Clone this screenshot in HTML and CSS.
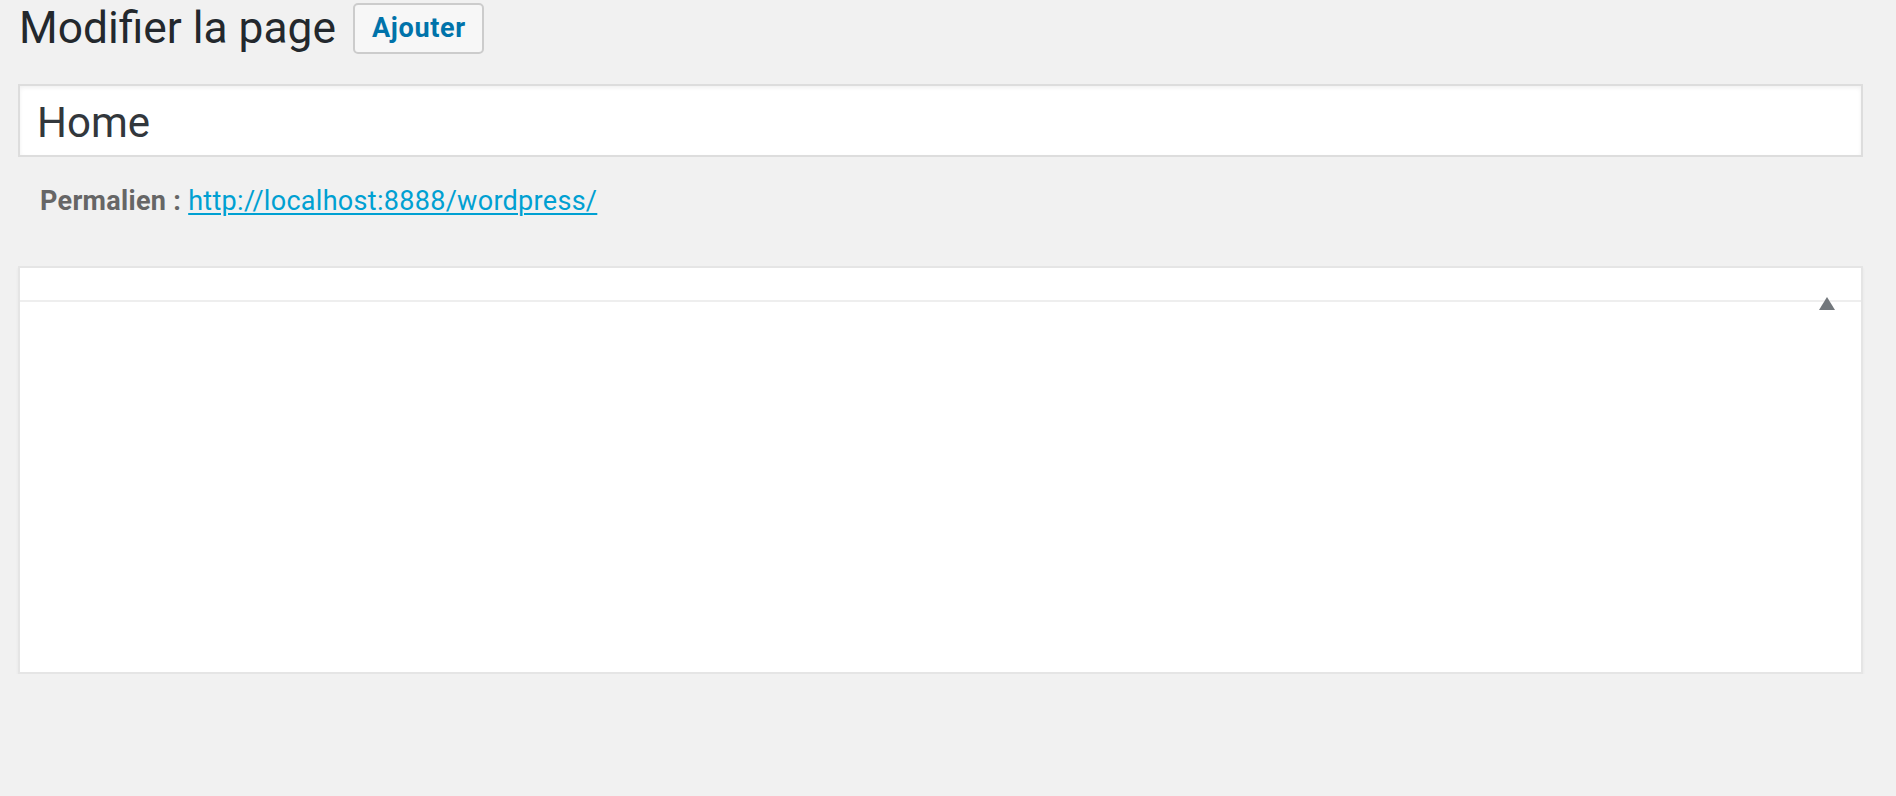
FILE: index.html
```html
<!DOCTYPE html>
<html lang="fr">
<head>
<meta charset="utf-8">
<title>Modifier la page</title>
<link rel="stylesheet" href="styles.css">
</head>
<body>
<div class="wrap">
  <div class="page-head">
    <h1 class="page-title">Modifier la page</h1>
    <a class="title-action" href="#">Ajouter</a>
  </div>
  <div class="title-box">
    <div class="title-input">Home</div>
  </div>
  <div class="permalink">
    <strong class="permalink-label">Permalien :</strong>
    <a class="permalink-url" href="#">http://localhost:8888/wordpress/</a>
  </div>
  <div class="editor-box">
    <div class="editor-head"></div>
    <span class="toggle-arrow"></span>
    <div class="editor-body"></div>
  </div>
</div>
</body>
</html>
```
FILE: styles.css
```css
html, body {
  margin: 0;
  padding: 0;
  background: #f1f1f1;
}

body {
  font-family: "Roboto", "Liberation Sans", sans-serif;
  color: #23282d;
}

.wrap {
  padding: 0 33px 0 18px;
}

.page-head {
  display: flex;
  align-items: center;
  height: 56px;
  gap: 17px;
  padding-left: 1px;
}

.page-title {
  margin: 0;
  font-size: 44.3px;
  font-weight: 400;
  line-height: 56px;
  color: #23282d;
}

.title-action {
  display: inline-flex;
  align-items: center;
  box-sizing: border-box;
  height: 51px;
  padding: 0 16px 0 17px;
  border: 2px solid #cccccc;
  border-radius: 5px;
  background: #f7f7f7;
  color: #0073aa;
  font-size: 27px;
  font-weight: 700;
  letter-spacing: 0.7px;
  text-decoration: none;
}

.title-box {
  margin-top: 28px;
  background: #ffffff;
  border: 2px solid #dddddd;
  box-shadow: inset 0 2px 4px rgba(0, 0, 0, 0.06);
}

.title-input {
  padding: 4px 17px 0;
  height: 65px;
  font-size: 42px;
  line-height: 65px;
  color: #32373c;
}

.permalink {
  margin-top: 26px;
  padding-left: 22px;
  font-size: 27px;
  letter-spacing: 0.3px;
  line-height: 36px;
}

.permalink-label {
  color: #666666;
  font-weight: 700;
}

.permalink-url {
  color: #00a0d2;
  text-decoration: underline;
  text-decoration-thickness: 2px;
  text-underline-offset: 3px;
}

.editor-box {
  position: relative;
  margin-top: 47px;
  background: #ffffff;
  border: 2px solid #e5e5e5;
  box-shadow: 0 2px 3px rgba(0, 0, 0, 0.05);
}

.editor-head {
  height: 32px;
  border-bottom: 2px solid #eeeeee;
}

.editor-body {
  height: 370px;
}

.toggle-arrow {
  position: absolute;
  top: 29px;
  right: 26px;
  width: 0;
  height: 0;
  border-left: 8.5px solid transparent;
  border-right: 8.5px solid transparent;
  border-bottom: 13px solid #72777c;
}
```
